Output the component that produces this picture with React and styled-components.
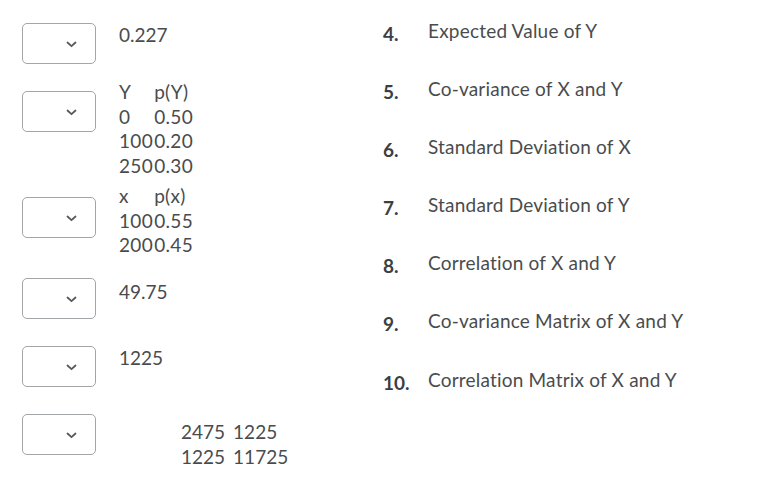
import React from "react";
import styled, { createGlobalStyle } from "styled-components";

const GlobalStyle = createGlobalStyle`
  body {
    margin: 0;
    background: #ffffff;
    font-family: Lato, "Liberation Sans", sans-serif;
    color: #494c4e;
  }
`;

const answers = [
  { mt: 23, dd: 0, tt: 0, kind: "text", value: "0.227" },
  {
    mt: 16,
    dd: 11,
    tt: 0,
    kind: "table",
    rows: [
      ["Y", "p(Y)"],
      ["0", "0.50"],
      ["100", "0.20"],
      ["250", "0.30"],
    ],
  },
  {
    mt: 6,
    dd: 13,
    tt: 0,
    kind: "table",
    rows: [
      ["x", "p(x)"],
      ["100", "0.55"],
      ["200", "0.45"],
    ],
  },
  { mt: 20.5, dd: 0, tt: 2, kind: "text", value: "49.75" },
  { mt: 27, dd: 0, tt: 0, kind: "text", value: "1225" },
  {
    mt: 27,
    dd: 0,
    tt: 6,
    kind: "matrix",
    rows: [
      ["2475", "1225"],
      ["1225", "11725"],
    ],
  },
];

const questions = [
  [4, "Expected Value of Y"],
  [5, "Co-variance of X and Y"],
  [6, "Standard Deviation of X"],
  [7, "Standard Deviation of Y"],
  [8, "Correlation of X and Y"],
  [9, "Co-variance Matrix of X and Y"],
  [10, "Correlation Matrix of X and Y"],
];

function Chevron() {
  return (
    <svg width="11" height="7" viewBox="0 0 11 7">
      <path
        d="M1.5 1.5 L5.5 5.2 L9.5 1.5"
        fill="none"
        stroke="#565a5c"
        strokeWidth="1.8"
        strokeLinecap="round"
        strokeLinejoin="round"
      />
    </svg>
  );
}

export default function App() {
  return (
    <>
      <GlobalStyle />
      <Page>
        <Answers>
          {answers.map((a, i) => (
            <AnswerRow key={i} $mt={a.mt}>
              <Select $mt={a.dd}>
                <Chevron />
              </Select>
              <Content $mt={a.tt} $indent={a.kind === "matrix" ? 62 : 0}>
                {a.kind === "text" && a.value}
                {a.kind === "table" && (
                  <Grid>
                    {a.rows.map((r, ri) =>
                      r.map((c, j) => <span key={ri + "-" + j}>{c}</span>)
                    )}
                  </Grid>
                )}
                {a.kind === "matrix" && (
                  <Matrix>
                    {a.rows.map((r, ri) =>
                      r.map((c, j) => <span key={ri + "-" + j}>{c}</span>)
                    )}
                  </Matrix>
                )}
              </Content>
            </AnswerRow>
          ))}
        </Answers>
        <Questions>
          {questions.map(([n, label]) => (
            <Question key={n}>
              <Num>{n}.</Num>
              <Label>{label}</Label>
            </Question>
          ))}
        </Questions>
      </Page>
    </>
  );
}

const Page = styled.div`
  display: flex;
  width: 769px;
  height: 484px;
  overflow: hidden;
`;

const Answers = styled.div`
  width: 361px;
  padding-left: 22px;
  display: flex;
  flex-direction: column;
`;

const AnswerRow = styled.div`
  display: flex;
  align-items: flex-start;
  margin-top: ${(p) => p.$mt}px;
`;

const Select = styled.div`
  box-sizing: border-box;
  width: 74px;
  height: 41px;
  margin-top: ${(p) => p.$mt}px;
  border: 1px solid #a3a6a8;
  border-radius: 5px;
  background: #ffffff;
  display: flex;
  align-items: center;
  justify-content: flex-end;
  padding: 2px 18px 0 0;
  flex-shrink: 0;
`;

const Content = styled.div`
  margin-left: ${(p) => 23 + p.$indent}px;
  margin-top: ${(p) => p.$mt}px;
  font-size: 19px;
  line-height: 24.5px;
`;

const Grid = styled.div`
  display: grid;
  grid-template-columns: auto auto;
  justify-content: start;
  column-gap: 1px;
  letter-spacing: 0.35px;
`;

const Matrix = styled.div`
  display: grid;
  grid-template-columns: auto auto;
  justify-content: start;
  column-gap: 8px;
`;

const Questions = styled.div`
  display: flex;
  flex-direction: column;
  padding-top: 18.5px;
`;

const Question = styled.div`
  display: flex;
  align-items: flex-start;
  height: 58.2px;
`;

const Num = styled.div`
  width: 45px;
  padding-top: 3px;
  font-size: 19px;
  font-weight: 700;
  line-height: 24px;
  color: #3c3f41;
`;

const Label = styled.div`
  font-size: 19px;
  line-height: 24px;
  letter-spacing: 0.2px;
`;
